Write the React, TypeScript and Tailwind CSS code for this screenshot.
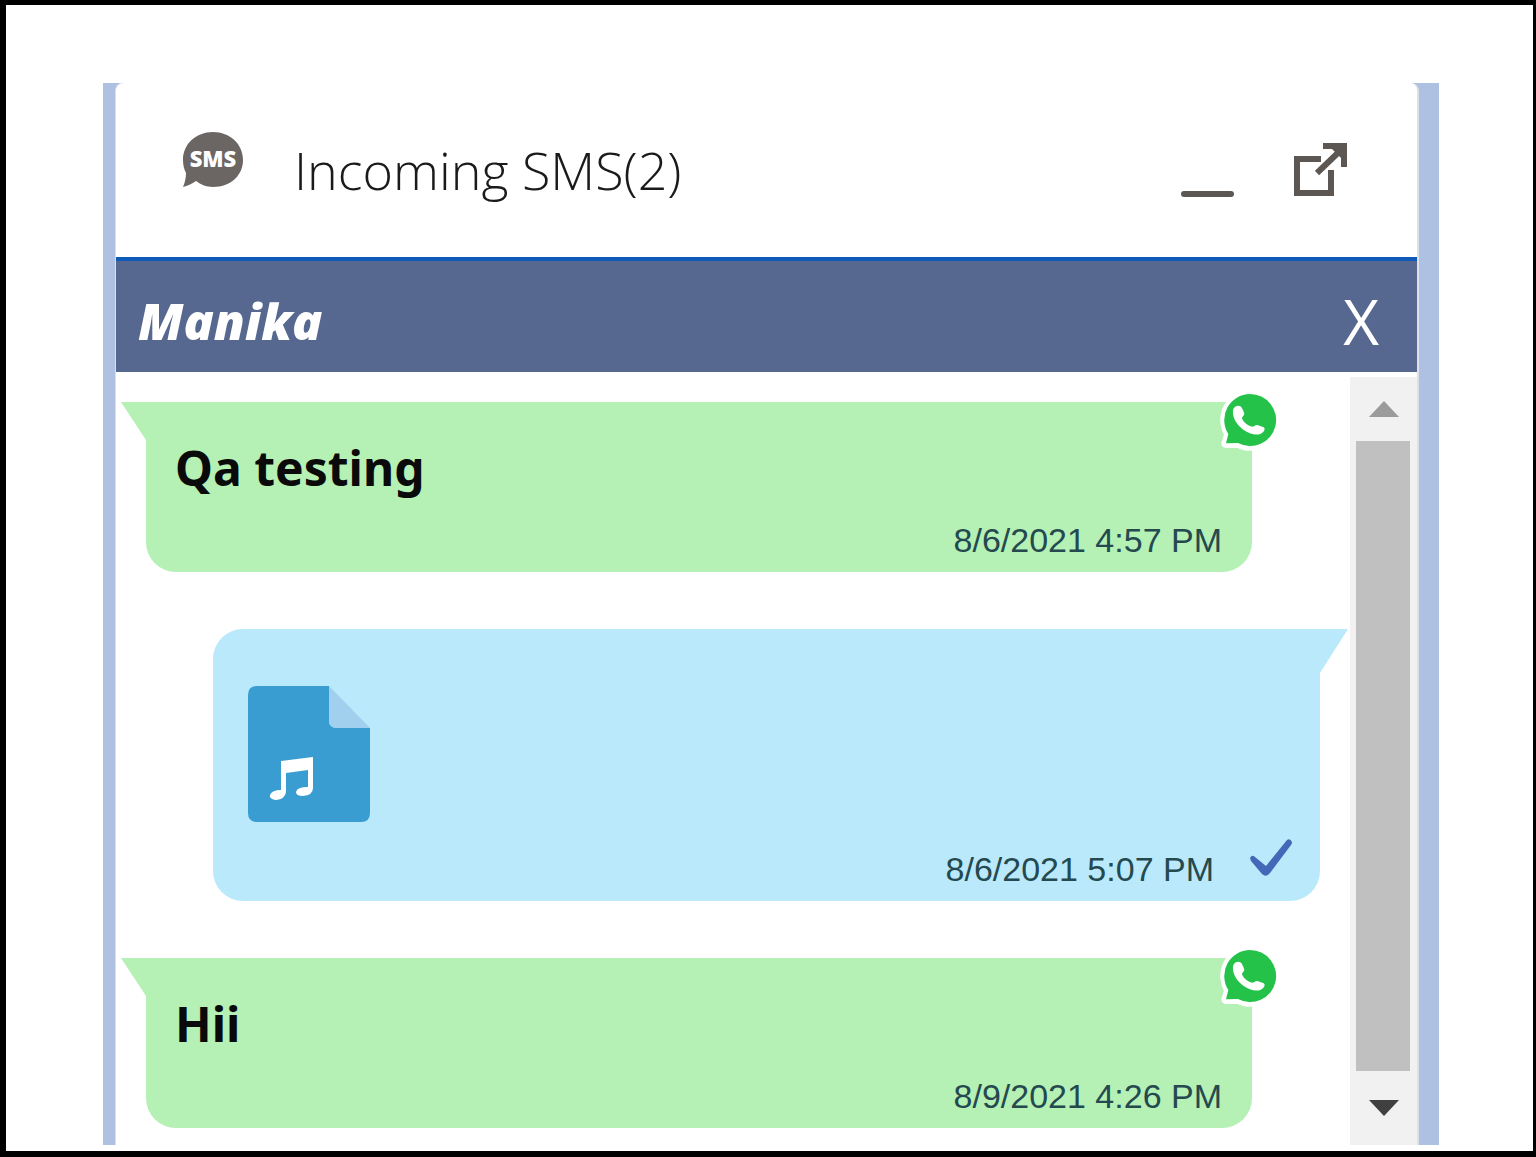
import React from 'react';

interface Message {
	id: number;
	text?: string;
	time: string;
	outgoing?: boolean;
}

const messages: Message[] = [
	{ id: 1, text: "Qa testing", time: "8/6/2021 4:57 PM" },
	{ id: 2, time: "8/6/2021 5:07 PM", outgoing: true },
	{ id: 3, text: "Hii", time: "8/9/2021 4:26 PM" },
];

const SmsIcon = () => (
	<svg className="w-[60px] h-[56px]" viewBox="0 0 60 56" aria-hidden="true">
		<path d="M30 0C47 0 60 12 60 28S47 55 30 55C23 55 17 52 13 49C9 52 4 54 0 55C2 50 3 46 3 41C1 37 0 33 0 28C0 12 13 0 30 0Z" fill="#6b6663" />
		<text x="30" y="35" textAnchor="middle" fontFamily="'Open Sans', sans-serif" fontSize="22" fontWeight="800" fill="#fff">SMS</text>
	</svg>
);

const PopOutIcon = () => (
	<svg className="w-[54px] h-[54px]" viewBox="0 0 54 54" fill="none" stroke="#5c5753" strokeWidth="6" aria-hidden="true">
		<path d="M28 16H4V50H38V27" />
		<path d="M24 30L49 6" />
		<path d="M30 3H51V24" />
		<path d="M37 4H50V17Z" fill="#5c5753" stroke="none" />
	</svg>
);

const WhatsAppIcon = () => (
	<svg className="w-[62px] h-[62px]" viewBox="0 0 186 186" aria-hidden="true">
		<path d="M102 12A78 78 0 1 1 66 159L30 160L39 132A78 78 0 0 1 102 12Z" fill="#fff" stroke="#fff" strokeWidth="28" strokeLinejoin="round" />
		<path d="M102 12A78 78 0 1 1 66 159L30 160L37 132A78 78 0 0 1 102 12Z" fill="#25c24a" />
		<path d="M51 60C53 49 69 44 75 50C79 54 84 66 85 71C85 77 77 80 78 85C82 97 97 109 109 110C114 110 119 104 124 105L143 112C150 117 143 128 133 132C118 137 99 131 82 119C63 105 48 83 51 60Z" fill="#fff" />
	</svg>
);

const AudioFile = () => (
	<svg className="w-[123px] h-[136px]" viewBox="0 0 123 136" role="img" aria-label="Audio file">
		<path d="M9 0H81V34Q81 42 89 42H122V127Q122 136 113 136H9Q0 136 0 127V9Q0 0 9 0Z" fill="#3a9dd2" />
		<path d="M81 0L122 42H89Q81 42 81 34Z" fill="#a0d0ed" />
		<path d="M33 75L65 71V102Q65 109 55 110Q48 110 48 106Q49 101 60 101V84L38 87V106Q37 113 28 114Q21 113 22 109Q24 104 33 104Z" fill="#fff" />
	</svg>
);

const Bubble = ({ message }: { message: Message }) => {
	if (message.outgoing) {
		return (
			<li className="relative ml-[97px] mr-[30px] h-[272px] rounded-[30px] rounded-tr-none bg-[#bae9fc] pl-[35px] pr-7 pt-[57px] pb-2 flex flex-col justify-between">
				<svg className="absolute left-full top-0 w-7 h-11" viewBox="0 0 28 44" aria-hidden="true">
					<path d="M0 0H28L0 44Z" fill="#bae9fc" />
				</svg>
				<AudioFile />
				<div className="flex justify-end items-end gap-9">
					<time className="text-[34px] leading-[48px] text-[#24494f]">{message.time}</time>
					<svg className="w-[42px] h-[54px]" viewBox="0 0 42 54" aria-label="Sent" role="img">
						<path d="M0 19Q2 15 5 18L16 27L37 1Q40 -1 42 3Q42 5 41 6L20 34Q16 39 12 35L1 22Z" fill="#4468b8" />
					</svg>
				</div>
			</li>
		);
	}

	return (
		<li className="relative ml-[30px] mr-[98px] h-[170px] rounded-b-[30px] bg-[#b5f0b5] pl-[29px] pr-[30px] pt-9 pb-2 flex flex-col justify-between">
			<svg className="absolute right-full top-0 w-[25px] h-[38px]" viewBox="0 0 25 38" aria-hidden="true">
				<path d="M0 0H25V38Z" fill="#b5f0b5" />
			</svg>
			<p className="font-['Noto_Sans','Open_Sans',sans-serif] font-bold text-[48px] leading-[60px] text-[#0a0a0a]">{message.text}</p>
			<time className="self-end text-[34px] leading-[48px] text-[#24494f]">{message.time}</time>
			<span className="absolute -top-3 -right-[26px]">
				<WhatsAppIcon />
			</span>
		</li>
	);
};

const ScrollBar = () => (
	<div className="w-[67px] mt-[5px] bg-[#f1f1f1] flex flex-col">
		<button aria-label="Scroll up" className="h-16 flex justify-center items-center">
			<svg className="w-[30px] h-4" viewBox="0 0 30 16">
				<path d="M15 0L30 16H0Z" fill="#9b9b9b" />
			</svg>
		</button>
		<div className="flex-1 ml-1.5 mr-[7px] bg-[#c0c0c0]" />
		<button aria-label="Scroll down" className="h-[74px] flex justify-center items-center">
			<svg className="w-[30px] h-4" viewBox="0 0 30 16">
				<path d="M0 0H30L15 16Z" fill="#404040" />
			</svg>
		</button>
	</div>
);

const App = () => {
	return (
		<main className="min-h-screen flex flex-col bg-white border-black border-t-[5px] border-b-[6px] border-l-[6px] border-r-[3px] pt-[78px] pb-1.5 pl-[97px] pr-[94px] font-['Liberation_Sans',Arial,sans-serif]">
			<section className="flex-1 flex flex-col bg-[#afc1e2] pl-3 pr-5">
				<div className="flex-1 flex flex-col bg-white border-l border-r-2 border-[#dfdfe6] rounded-t-lg">
					<header className="h-[174px] flex items-center pl-[67px] pr-[70px]">
						<div className="pb-5">
							<SmsIcon />
						</div>
						<h1 className="flex-1 pl-[51px] font-['Open_Sans','Noto_Sans',sans-serif] font-light text-[52px] leading-[60px] text-[#1a1a1a]">Incoming SMS(2)</h1>
						<div className="flex gap-[59px]">
							<button aria-label="Minimize" className="w-[53px] flex items-end">
								<span className="block w-full h-1.5 rounded-sm bg-[#5c5753]" />
							</button>
							<button aria-label="Open in new window">
								<PopOutIcon />
							</button>
						</div>
					</header>
					<div className="h-[115px] flex items-center justify-between bg-[#56688f] border-t-4 border-[#0f59b8] pl-[22px] pr-[38px] pt-3 pb-1 text-white">
						<h2 className="font-['Open_Sans','Noto_Sans',sans-serif] italic font-extrabold text-[50px] leading-[60px]">Manika</h2>
						<button aria-label="Close" className="font-['Open_Sans','Noto_Sans',sans-serif] font-medium text-[62px] leading-[60px]">X</button>
					</div>
					<div className="flex-1 flex">
						<ul className="flex-1 pt-[30px] pb-4 flex flex-col gap-[57px]">
							{messages.map((message) => (
								<Bubble key={message.id} message={message} />
							))}
						</ul>
						<ScrollBar />
					</div>
				</div>
			</section>
		</main>
	);
};

export default App;
